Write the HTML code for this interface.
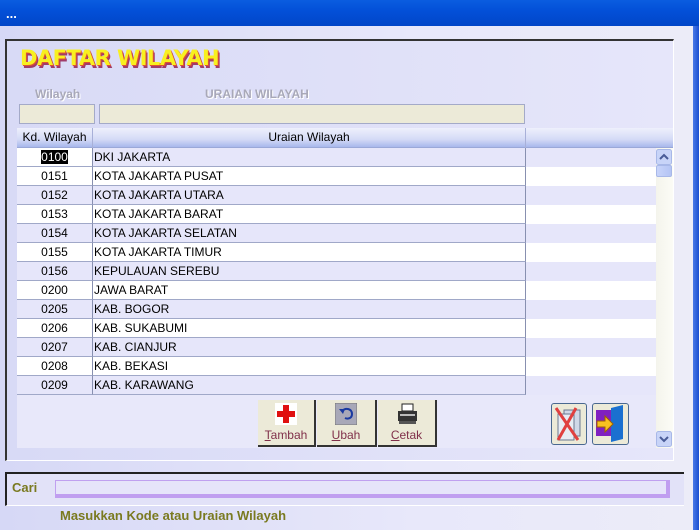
<!DOCTYPE html>
<html><head><style>
*{margin:0;padding:0;box-sizing:border-box}
body{width:699px;height:530px;overflow:hidden;position:relative;font-family:"Liberation Sans",sans-serif;font-size:12px;background:linear-gradient(90deg,#d6d8f6,#e8e8fa 60%,#ececf8)}
.a{position:absolute}
.title{left:0;top:0;width:699px;height:26px;background:linear-gradient(180deg,#0a5de0,#0350d8 40%,#0246c8);color:#fff;font-size:13px;font-weight:bold;padding:6px 6px}
.rb{left:693px;top:26px;width:6px;height:504px;background:linear-gradient(90deg,#4a7ae8,#1b4fd0)}
.panel{left:5px;top:39px;width:669px;height:422px;border-top:2px solid #333;border-left:2px solid #333;border-right:1px solid #fff;border-bottom:1px solid #fff;background:linear-gradient(90deg,#d8daf6,#e6e6fa)}
.inp{background:#ecead8;border:1px solid #a4aac8}
.grid{left:17px;top:128px;width:656px;height:320px;background:#e8e8fa;border:1px solid #a8b0d0}
.hdr{left:17px;top:128px;width:656px;height:20px;background:linear-gradient(180deg,#eef0fc,#d4daf6 60%,#a8b8ec);border-bottom:1px solid #9aa8d8}
.row{position:absolute;left:17px;width:639px;height:19px;font-size:12px;line-height:18px}
.row .k{position:absolute;left:0;width:76px;text-align:center;border-right:1px solid #8890b0;border-bottom:1px solid #a0a8c8;height:19px}
.row .u{position:absolute;left:76px;width:433px;padding-left:1px;border-right:1px solid #8890b0;border-bottom:1px solid #a0a8c8;height:19px}
.btn{background:#ecead8;border-right:2px solid #333;border-bottom:2px solid #333;text-align:center;color:#80304a;font-size:12px}
.btn u{text-decoration:underline}
</style></head><body>
<div class="a title">...</div>
<div class="a rb"></div>
<div class="a panel"></div>
<div class="a" style="left:22px;top:49px;font-size:21px;font-weight:bold;color:#a03c6a;letter-spacing:-0.5px;font-family:'DejaVu Sans',sans-serif">DAFTAR WILAYAH</div>
<div class="a" style="left:20px;top:46px;font-size:21px;font-weight:bold;color:#f8f020;letter-spacing:-0.5px;font-family:'DejaVu Sans',sans-serif;text-shadow:1px 1px 0 #e05030">DAFTAR WILAYAH</div>
<div class="a" style="left:35px;top:87px;font-weight:bold;color:#a8a8b8;text-shadow:1px 1px 0 #fff">Wilayah</div>
<div class="a" style="left:205px;top:87px;font-weight:bold;color:#a8a8b8;text-shadow:1px 1px 0 #fff">URAIAN WILAYAH</div>
<div class="a inp" style="left:19px;top:104px;width:76px;height:20px"></div>
<div class="a inp" style="left:99px;top:104px;width:426px;height:20px"></div>
<div class="a grid"></div>
<div class="a hdr"></div>
<div class="a" style="left:17px;top:128px;width:76px;height:20px;text-align:center;line-height:18px;border-right:1px solid #a8b0d8">Kd. Wilayah</div>
<div class="a" style="left:93px;top:128px;width:433px;height:20px;text-align:center;line-height:18px;border-right:1px solid #a8b0d8">Uraian Wilayah</div>
<div class="a" style="left:17px;top:148px;width:639px;height:247px;background:#fff"></div>
<div id="rows"></div>
<div class="a" style="left:656px;top:148px;width:17px;height:300px;background:linear-gradient(90deg,#f4f4ec,#fcfcf6)"></div>
<svg class="a" style="left:656px;top:149px" width="16" height="16"><rect x="0.5" y="0.5" width="15" height="15" rx="2" fill="#c8d4f8" stroke="#a8b8e8"/><path d="M4 10l4-4 4 4" stroke="#4a5c98" stroke-width="2" fill="none"/></svg>
<div class="a" style="left:656px;top:165px;width:16px;height:12px;background:linear-gradient(90deg,#c8d4fa,#b4c4f4);border:1px solid #a8b8e8;border-radius:2px"></div>
<svg class="a" style="left:656px;top:431px" width="16" height="16"><rect x="0.5" y="0.5" width="15" height="15" rx="2" fill="#c8d4f8" stroke="#a8b8e8"/><path d="M4 6l4 4 4-4" stroke="#4a5c98" stroke-width="2" fill="none"/></svg>
<div class="a" style="left:17px;top:395px;width:639px;height:53px;background:#e8e8fa"></div>
<div class="a btn" style="left:258px;top:400px;width:58px;height:47px"><svg width="22" height="22" style="margin-top:3px"><rect width="22" height="22" fill="#fff"/><path d="M8 2h6v6h6v6h-6v6H8v-6H2V8h6z" fill="#e01010"/></svg><div><u>T</u>ambah</div></div>
<div class="a btn" style="left:317px;top:400px;width:60px;height:47px"><svg width="22" height="22" style="margin-top:3px"><rect width="22" height="22" fill="#a8a8b8" stroke="#777"/><path d="M7 8c4-4 10-2 10 3s-5 5-7 4" stroke="#1a3aa0" stroke-width="2" fill="none"/><path d="M4 6l6 0-2 5z" fill="#1a3aa0"/></svg><div><u>U</u>bah</div></div>
<div class="a btn" style="left:378px;top:400px;width:59px;height:47px"><svg width="22" height="22" style="margin-top:3px"><rect x="6" y="1" width="11" height="7" fill="#fff" stroke="#222"/><rect x="2" y="8" width="19" height="10" fill="#333"/><rect x="4" y="11" width="15" height="2" fill="#bbb"/><rect x="3" y="18" width="17" height="3" fill="#555"/></svg><div><u>C</u>etak</div></div>
<div class="a" style="left:551px;top:403px;width:36px;height:42px;border:1px solid #4a6890;border-radius:3px;background:#ecead8"><svg width="34" height="40"><rect x="12" y="6" width="16" height="26" fill="#d0d8e8" stroke="#6a7890"/><rect x="6" y="10" width="16" height="26" fill="#e8ecf4" stroke="#6a7890"/><path d="M4 4L26 36M24 4L6 36" stroke="#e04040" stroke-width="3"/></svg></div>
<div class="a" style="left:592px;top:403px;width:37px;height:42px;border:1px solid #4a6890;border-radius:3px;background:#ecead8"><svg width="35" height="40"><rect x="3" y="6" width="20" height="26" fill="#8020c0"/><path d="M18 4l12-3v34l-12 3z" fill="#1a70d0"/><path d="M4 17h8v-5l8 8-8 8v-5H4z" fill="#f8c020" stroke="#a06000"/></svg></div>
<div class="a" style="left:5px;top:472px;width:679px;height:34px;border-top:2px solid #222;border-left:2px solid #222;border-bottom:1px solid #fff;background:#e2e2f8"></div>
<div class="a" style="left:12px;top:480px;font-weight:bold;color:#7a7a20;font-size:13px">Cari</div>
<div class="a" style="left:55px;top:480px;width:615px;height:18px;background:#e6e4fa;border:1px solid #c0a0f0;border-right:4px solid #c09ef0;border-bottom:4px solid #c09ef0"></div>
<div class="a" style="left:60px;top:508px;font-weight:bold;color:#7a7a20;font-size:13px">Masukkan Kode atau Uraian Wilayah</div>
<script>
var d=[["0100","DKI JAKARTA"],["0151","KOTA JAKARTA PUSAT"],["0152","KOTA JAKARTA UTARA"],["0153","KOTA JAKARTA BARAT"],["0154","KOTA JAKARTA SELATAN"],["0155","KOTA JAKARTA TIMUR"],["0156","KEPULAUAN SEREBU"],["0200","JAWA BARAT"],["0205","KAB. BOGOR"],["0206","KAB. SUKABUMI"],["0207","KAB. CIANJUR"],["0208","KAB. BEKASI"],["0209","KAB. KARAWANG"]];
var h="";d.forEach(function(r,i){var bg=i%2==0?"#e6e6fa":"#fff";var kb=i==0?"#fff":bg;var kt=i==0?'<span style="background:#000;color:#fff">'+r[0]+'</span>':r[0];h+='<div class="row" style="top:'+(148+i*19)+'px;background:'+bg+'"><div class="k" style="background:'+kb+'">'+kt+'</div><div class="u" style="background:'+bg+'">'+r[1]+'</div></div>';});
document.getElementById("rows").innerHTML=h;
</script>
</body></html>
